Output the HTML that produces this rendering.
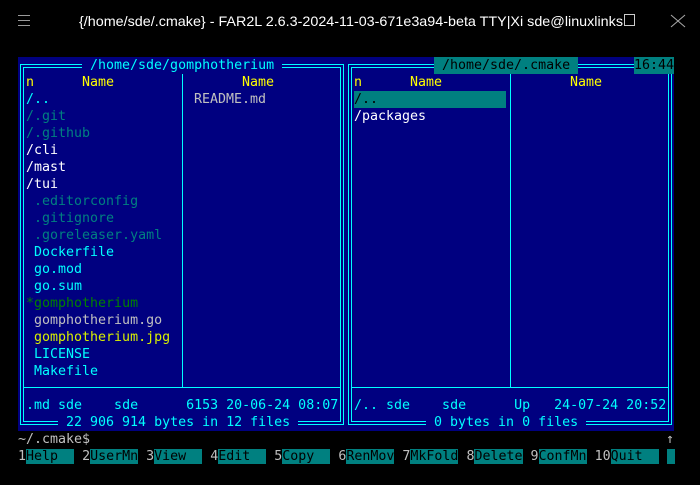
<!DOCTYPE html>
<html><head><meta charset="utf-8"><style>
*{margin:0;padding:0;box-sizing:border-box}
body{width:700px;height:485px;background:#000;position:relative;overflow:hidden;font-family:"DejaVu Sans Mono","Liberation Mono",monospace;font-size:13.3px}
.t{position:absolute;line-height:17px;height:17px;white-space:pre;padding-top:1px;line-height:16px}
.b{position:absolute;border:1px solid #00ffff}
.l{position:absolute;background:#00ffff}
.c{color:#00ffff}.d{color:#008080}.w{color:#ffffff}.g{color:#c0c0c0}.y{color:#ffff00}.gr{color:#008000}.yg{color:#d8f000}
.k{background:#008080;color:#000}
</style></head><body>
<svg style="position:absolute;left:0;top:0" width="700" height="45">
<g stroke="#9a9a9a" stroke-width="1"><line x1="18" y1="15.5" x2="30" y2="15.5"/><line x1="18" y1="20.5" x2="30" y2="20.5"/><line x1="18" y1="25.5" x2="30" y2="25.5"/></g>
<text x="79" y="26" textLength="544" lengthAdjust="spacingAndGlyphs" fill="#fff" font-family="Liberation Sans, sans-serif" font-size="14">{/home/sde/.cmake} - FAR2L 2.6.3-2024-11-03-671e3a94-beta TTY|Xi sde@linuxlinks</text>
<rect x="624.5" y="14.5" width="10" height="11" fill="none" stroke="#ccc"/>
<g stroke="#aaa"><line x1="671" y1="15" x2="685" y2="27"/><line x1="685" y1="15" x2="671" y2="27"/></g>
</svg>
<div style="position:absolute;left:18px;top:57px;width:656px;height:374px;background:#000080"></div>
<div class="b" style="left:20px;top:64px;width:324px;height:361px"></div>
<div class="b" style="left:23px;top:67px;width:318px;height:355px"></div>
<div class="l" style="left:182px;top:67px;width:1px;height:320px"></div>
<div class="l" style="left:23px;top:387px;width:318px;height:1px"></div>
<div class="b" style="left:348px;top:64px;width:324px;height:361px"></div>
<div class="b" style="left:351px;top:67px;width:318px;height:355px"></div>
<div class="l" style="left:510px;top:67px;width:1px;height:320px"></div>
<div class="l" style="left:351px;top:387px;width:318px;height:1px"></div>

<div class="t c" style="left:82px;top:57px;background:#000080"> /home/sde/gomphotherium </div>
<div class="t k" style="left:434px;top:57px"> /home/sde/.cmake </div>
<div class="t k" style="left:634px;top:57px">16:44</div>

<div class="t y" style="left:26px;top:74px">n</div>
<div class="t y" style="left:82px;top:74px">Name</div>
<div class="t y" style="left:242px;top:74px">Name</div>
<div class="t y" style="left:354px;top:74px">n</div>
<div class="t y" style="left:410px;top:74px">Name</div>
<div class="t y" style="left:570px;top:74px">Name</div>

<div class="t c" style="left:26px;top:91px">/..</div>
<div class="t d" style="left:26px;top:108px">/.git</div>
<div class="t d" style="left:26px;top:125px">/.github</div>
<div class="t w" style="left:26px;top:142px">/cli</div>
<div class="t w" style="left:26px;top:159px">/mast</div>
<div class="t w" style="left:26px;top:176px">/tui</div>
<div class="t d" style="left:34px;top:193px">.editorconfig</div>
<div class="t d" style="left:34px;top:210px">.gitignore</div>
<div class="t d" style="left:34px;top:227px">.goreleaser.yaml</div>
<div class="t c" style="left:34px;top:244px">Dockerfile</div>
<div class="t c" style="left:34px;top:261px">go.mod</div>
<div class="t c" style="left:34px;top:278px">go.sum</div>
<div class="t gr" style="left:26px;top:295px">*gomphotherium</div>
<div class="t g" style="left:34px;top:312px">gomphotherium.go</div>
<div class="t yg" style="left:34px;top:329px">gomphotherium.jpg</div>
<div class="t c" style="left:34px;top:346px">LICENSE</div>
<div class="t c" style="left:34px;top:363px">Makefile</div>
<div class="t g" style="left:194px;top:91px">README.md</div>

<div class="t k" style="left:354px;top:91px;width:152px">/..</div>
<div class="t w" style="left:354px;top:108px">/packages</div>

<div class="t c" style="left:26px;top:397px">.md sde    sde      6153 20-06-24 08:07</div>
<div class="t c" style="left:354px;top:397px">/.. sde    sde      Up   24-07-24 20:52</div>
<div class="t c" style="left:58px;top:414px;background:#000080"> 22 906 914 bytes in 12 files </div>
<div class="t c" style="left:426px;top:414px;background:#000080"> 0 bytes in 0 files </div>

<div class="t g" style="left:18px;top:431px">~/.cmake$</div>
<div class="t g" style="left:666px;top:431px">↑</div>

<div class="t g" style="left:18px;top:448px">1<span class="k">Help  </span> 2<span class="k">UserMn</span> 3<span class="k">View  </span> 4<span class="k">Edit  </span> 5<span class="k">Copy  </span> 6<span class="k">RenMov</span> 7<span class="k">MkFold</span> 8<span class="k">Delete</span> 9<span class="k">ConfMn</span> 10<span class="k">Quit  </span> <span class="k"> </span></div>
</body></html>
